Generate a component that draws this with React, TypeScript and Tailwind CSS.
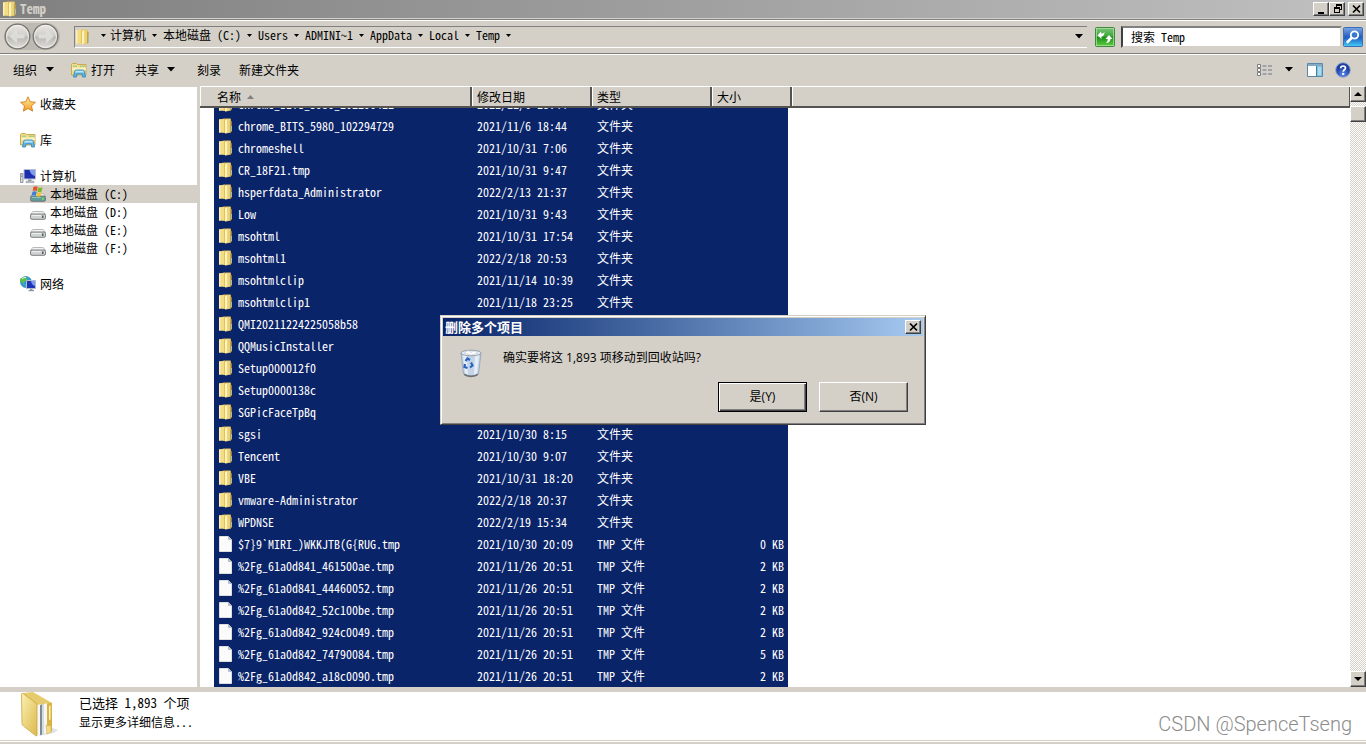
import type { ReactNode } from "react";

type Entry = { name: string; date?: string; type?: string; size?: string };

const FOLDER = "文件夹";
const TMP = "TMP 文件";

const ENTRIES: Entry[] = [
    { name: "chrome_BITS_5980_102290411", date: "2021/11/6 18:44", type: FOLDER },
    { name: "chrome_BITS_5980_102294729", date: "2021/11/6 18:44", type: FOLDER },
    { name: "chromeshell", date: "2021/10/31 7:06", type: FOLDER },
    { name: "CR_18F21.tmp", date: "2021/10/31 9:47", type: FOLDER },
    { name: "hsperfdata_Administrator", date: "2022/2/13 21:37", type: FOLDER },
    { name: "Low", date: "2021/10/31 9:43", type: FOLDER },
    { name: "msohtml", date: "2021/10/31 17:54", type: FOLDER },
    { name: "msohtml1", date: "2022/2/18 20:53", type: FOLDER },
    { name: "msohtmlclip", date: "2021/11/14 10:39", type: FOLDER },
    { name: "msohtmlclip1", date: "2021/11/18 23:25", type: FOLDER },
    { name: "QMI20211224225058b58" },
    { name: "QQMusicInstaller" },
    { name: "Setup000012f0" },
    { name: "Setup0000138c" },
    { name: "SGPicFaceTpBq" },
    { name: "sgsi", date: "2021/10/30 8:15", type: FOLDER },
    { name: "Tencent", date: "2021/10/30 9:07", type: FOLDER },
    { name: "VBE", date: "2021/10/31 18:20", type: FOLDER },
    { name: "vmware-Administrator", date: "2022/2/18 20:37", type: FOLDER },
    { name: "WPDNSE", date: "2022/2/19 15:34", type: FOLDER },
    { name: "$7}9`MIRI_)WKKJTB(G{RUG.tmp", date: "2021/10/30 20:09", type: TMP, size: "0 KB" },
    { name: "%2Fg_61a0d841_461500ae.tmp", date: "2021/11/26 20:51", type: TMP, size: "2 KB" },
    { name: "%2Fg_61a0d841_44460052.tmp", date: "2021/11/26 20:51", type: TMP, size: "2 KB" },
    { name: "%2Fg_61a0d842_52c100be.tmp", date: "2021/11/26 20:51", type: TMP, size: "2 KB" },
    { name: "%2Fg_61a0d842_924c0049.tmp", date: "2021/11/26 20:51", type: TMP, size: "2 KB" },
    { name: "%2Fg_61a0d842_74790084.tmp", date: "2021/11/26 20:51", type: TMP, size: "5 KB" },
    { name: "%2Fg_61a0d842_a18c0090.tmp", date: "2021/11/26 20:51", type: TMP, size: "2 KB" },
];

const CRUMBS = ["计算机", "本地磁盘 (C:)", "Users", "ADMINI~1", "AppData", "Local", "Temp"];

export default function App() {
    return (
        <div className="h-screen flex flex-col overflow-hidden bg-[#d4d0c8] text-black text-xs font-['Noto_Sans_Mono_CJK_SC','Noto_Sans_CJK_SC',monospace]">
            <TitleBar />
            <AddressBar />
            <Toolbar />
            <main className="flex-1 min-h-0 flex">
                <NavTree />
                <FileList />
            </main>
            <DetailsPane />
            <DeleteDialog />
        </div>
    );
}

/* Window chrome */

function TitleBar() {
    return (
        <header className="h-[18px] shrink-0 flex items-center pl-0.5 pr-0.5 bg-linear-to-r from-[#808080] to-[#c0c0c0]">
            <FolderIcon />
            <h1 className="ml-0.5 flex-1 text-[13px] font-bold text-[#d4d0c8]">Temp</h1>
            <div className="flex">
                <ChromeButton label="最小化"><path d="M3 9h6v2H3z" /></ChromeButton>
                <ChromeButton label="还原">
                    <path d="M5 1h6v6H9V6h1V3H6v1H5zM3 4h6v6H3zm1 2v3h4V6z" fillRule="evenodd" />
                </ChromeButton>
                <div className="w-[3px]" />
                <ChromeButton label="关闭"><CloseGlyph /></ChromeButton>
            </div>
        </header>
    );
}

function CloseGlyph() {
    return <path d="M3 2.500l7 7M10 2.500l-7 7" stroke="#000" strokeWidth="1.700" />;
}

function ChromeButton({ label, children }: { label: string; children: ReactNode }) {
    return (
        <button aria-label={label} className="w-4 h-[14px] flex items-center justify-center bg-[#d4d0c8] border border-t-white border-l-white border-r-[#404040] border-b-[#404040] shadow-[inset_-1px_-1px_0_#808080]">
            <svg width="13" height="12" viewBox="0 0 13 12">{children}</svg>
        </button>
    );
}

function Caret({ small }: { small?: boolean }) {
    return small ? (
        <svg width="5" height="3" viewBox="0 0 5 3"><path d="M0 0h5L2.500 3z" /></svg>
    ) : (
        <svg width="8" height="5" viewBox="0 0 8 5"><path d="M0 0h8L4 4.500z" /></svg>
    );
}

function AddressBar() {
    return (
        <div className="mt-px h-[35px] shrink-0 flex items-center pl-1 pr-[3px] border-t border-t-[#808080] border-b border-b-[#808080] shadow-[inset_0_1px_0_#fff,0_1px_0_#fff]">
            <div className="flex rounded-full bg-[#bdbab4]">
                <NavButton label="后退" />
                <NavButton label="前进" flip />
            </div>

            <nav className="ml-3.5 flex-1 h-[22px] min-w-0 flex items-center border-t border-l border-[#808080] border-b border-b-white">
                <FolderIcon />
                <div className="w-1.5" />
                <ol className="flex items-center pb-[3px]">
                    <li className="w-[13px] flex justify-center"><Caret small /></li>
                    {CRUMBS.map((crumb) => (
                        <li key={crumb} className="flex items-center">
                            <a href="#" className="whitespace-nowrap">{crumb}</a>
                            <span className="w-[17px] flex justify-center"><Caret small /></span>
                        </li>
                    ))}
                </ol>
                <button aria-label="以前的位置" className="ml-auto mr-1"><Caret /></button>
            </nav>

            <button aria-label="刷新" className="ml-2 mr-1.5">
                <svg width="20" height="20" viewBox="0 0 20 20">
                    <defs>
                        <linearGradient id="go" x2="0" y2="1">
                            <stop offset="0" stopColor="#7cc47a" />
                            <stop offset=".45" stopColor="#3fa73c" />
                            <stop offset=".5" stopColor="#1c8e1a" />
                            <stop offset="1" stopColor="#5fd03f" />
                        </linearGradient>
                    </defs>
                    <rect x=".5" y=".5" width="19" height="19" rx="1" fill="url(#go)" stroke="#3f8a3c" />
                    <rect x="1.5" y="1.5" width="17" height="17" fill="none" stroke="#b5e3ae" strokeOpacity=".7" />
                    <path d="M2.500 8.500L6 4.500l.3 2q1.700.2 3.200-1.500 0 4-3.200 4.700l.2 2.300z" fill="#fff" />
                    <path d="M10.500 9.500h2.300L14 8l3.500 4h-2q-.5 4-4.500 4 2-1.500 1.800-4h-2.300l2-2.500z" fill="#fff" />
                </svg>
            </button>

            <form className="flex items-center">
                <input aria-label="搜索" placeholder="搜索 Temp" className="w-[221px] h-[22px] pl-2 bg-white border-2 border-t-[#808080] border-l-[#404040] border-r-[#d4d0c8] border-b-[#d4d0c8] outline-none placeholder:text-black" />
                <button type="button" aria-label="开始搜索" className="ml-px">
                    <svg width="20" height="20" viewBox="0 0 20 20">
                        <defs>
                            <linearGradient id="find" x2="0" y2="1">
                                <stop offset="0" stopColor="#7ba7e2" />
                                <stop offset=".45" stopColor="#2c62c4" />
                                <stop offset=".55" stopColor="#1f5fc6" />
                                <stop offset="1" stopColor="#46d0f4" />
                            </linearGradient>
                        </defs>
                        <rect x=".5" y=".5" width="19" height="19" rx="1" fill="url(#find)" stroke="#3d6db5" />
                        <circle cx="11.500" cy="8" r="3.700" fill="#3a77d3" stroke="#fff" strokeWidth="1.800" />
                        <path d="M8.500 11l-4 4" stroke="#fff" strokeWidth="2.600" strokeLinecap="round" />
                    </svg>
                </button>
            </form>
        </div>
    );
}

function NavButton({ label, flip }: { label: string; flip?: boolean }) {
    const id = flip ? "fwd" : "back";
    return (
        <button aria-label={label} className="w-7 h-[27px]">
            <svg width="28" height="27" viewBox="0 0 28 27">
                <defs>
                    <linearGradient id={id} x2="0" y2="1">
                        <stop offset="0" stopColor="#e9e8e5" />
                        <stop offset=".48" stopColor="#cfcdc9" />
                        <stop offset=".52" stopColor="#b9b7b3" />
                        <stop offset="1" stopColor="#e2e0dc" />
                    </linearGradient>
                </defs>
                <circle cx="13.500" cy="13.500" r="12.300" fill={`url(#${id})`} stroke="#77756f" strokeWidth="1.300" />
                <circle cx="13.500" cy="13.500" r="11" fill="none" stroke="#f3f2ef" strokeOpacity=".8" />
                <path
                    d={flip ? "M21 13.500l-6.500-6v4.500H7v3h7.500v4.500z" : "M6 13.500l6.500-6v4.500H20v3h-7.500v4.500z"}
                    fill="#dddbd7"
                    stroke="#e6e5e1"
                    strokeWidth=".6"
                />
            </svg>
        </button>
    );
}

function Toolbar() {
    return (
        <div className="mt-px h-[31px] shrink-0 flex items-center pl-[13px] pr-[15px] pb-0.5 whitespace-nowrap">
            <button className="flex items-center gap-[9px]">组织 <Caret /></button>
            <button className="ml-[17px] flex items-center gap-1"><LibraryIcon />打开</button>
            <button className="ml-5 flex items-center gap-2">共享 <Caret /></button>
            <button className="ml-[22px]">刻录</button>
            <button className="ml-[18px]">新建文件夹</button>
            <div className="ml-auto flex items-center">
                <button aria-label="更改您的视图">
                    <svg width="16" height="14" viewBox="0 0 16 14" fill="none">
                        <path d="M.5 1.500h3v3h-3zM.5 5.500h3v3h-3zM.5 9.500h3v3h-3z" fill="#fff" stroke="#7b7b80" />
                        <path d="M5.500 3h4M11 3h4M5.500 7h4M11 7h4M5.500 11h4M11 11h4" stroke="#6a7488" strokeWidth="1.200" />
                    </svg>
                </button>
                <button aria-label="更多选项" className="ml-3"><Caret /></button>
                <button aria-label="预览窗格" className="ml-[14px]">
                    <svg width="16" height="14" viewBox="0 0 16 14">
                        <path d="M.5.500h15v13H.5z" fill="#fff" stroke="#5b87a8" />
                        <path d="M1 1h14v2H1z" fill="#86aac4" />
                        <path d="M10 3h5v10h-5z" fill="#7cc6e4" />
                        <path d="M9.500 3v10" stroke="#4e7b99" />
                        <path d="M11 4h3v8h-3z" fill="#a8dcf0" />
                    </svg>
                </button>
                <button aria-label="获取帮助" className="ml-3">
                    <svg width="16" height="16" viewBox="0 0 16 16">
                        <defs>
                            <radialGradient id="help" cy=".8">
                                <stop offset="0" stopColor="#5d8df0" />
                                <stop offset="1" stopColor="#1e3f9e" />
                            </radialGradient>
                        </defs>
                        <circle cx="8" cy="8" r="7.300" fill="url(#help)" stroke="#93a4cc" />
                        <path d="M5.700 6.300c0-3 4.800-3 4.800-.2 0 1.700-2.300 1.700-2.300 3.600" fill="none" stroke="#fff" strokeWidth="1.700" />
                        <path d="M7.200 10.900h2v2h-2z" fill="#fff" />
                    </svg>
                </button>
            </div>
        </div>
    );
}

/* Navigation tree */

function NavTree() {
    return (
        <nav className="w-[197px] shrink-0 mt-px pt-2 bg-white leading-[18px]">
            <TreeItem icon={<StarIcon />} label="收藏夹" />
            <div className="h-[18px]" />
            <TreeItem icon={<LibraryIcon />} label="库" />
            <div className="h-[18px]" />
            <TreeItem icon={<ComputerIcon />} label="计算机" />
            <TreeItem icon={<DriveIcon system />} label="本地磁盘 (C:)" nested selected />
            <TreeItem icon={<DriveIcon />} label="本地磁盘 (D:)" nested />
            <TreeItem icon={<DriveIcon />} label="本地磁盘 (E:)" nested />
            <TreeItem icon={<DriveIcon />} label="本地磁盘 (F:)" nested />
            <div className="h-[18px]" />
            <TreeItem icon={<NetworkIcon />} label="网络" />
        </nav>
    );
}

function TreeItem({ icon, label, nested, selected }: { icon: ReactNode; label: string; nested?: boolean; selected?: boolean }) {
    return (
        <a href="#" className={`h-[18px] flex items-center gap-1 ${nested ? "pl-[30px]" : "pl-5"} ${selected ? "bg-[#d4d0c8]" : ""}`}>
            {icon}
            <span>{label}</span>
        </a>
    );
}

/* File list */

function FileList() {
    return (
        <section className="ml-[3px] flex-1 min-w-0 flex bg-white">
            <div className="flex-1 min-w-0 flex flex-col">
                <div className="h-[22px] shrink-0 flex bg-[#d4d0c8] border-t border-t-white border-b-2 border-b-[#55534f]">
                    <button className="w-[272px] flex items-center gap-1.5 pl-4 border-l border-l-white border-r-2 border-r-[#55534f]">
                        名称
                        <svg width="7" height="4" viewBox="0 0 7 4"><path d="M3.500 0L7 4H0z" fill="#808080" /></svg>
                    </button>
                    <HeaderCell className="w-[120px]">修改日期</HeaderCell>
                    <HeaderCell className="w-[120px]">类型</HeaderCell>
                    <HeaderCell className="w-20">大小</HeaderCell>
                    <div className="flex-1 border-l border-l-white border-r border-r-[#55534f]" />
                </div>
                {/* scrolled so that the last row sits on the lower edge */}
                <div className="flex-1 min-h-0 overflow-hidden flex flex-col justify-end pl-[14px]">
                    <table className="w-[574px] shrink-0 table-fixed bg-[#0a246a] text-white">
                        <colgroup>
                            <col className="w-[257px]" />
                            <col className="w-[120px]" />
                            <col className="w-[120px]" />
                            <col className="w-[77px]" />
                        </colgroup>
                        <tbody>
                            {ENTRIES.map((entry) => <FileRow key={entry.name} entry={entry} />)}
                        </tbody>
                    </table>
                </div>
            </div>
            <Scrollbar />
        </section>
    );
}

function HeaderCell({ className, children }: { className: string; children: ReactNode }) {
    return (
        <button className={`${className} pl-1 text-left border-l border-l-white border-r-2 border-r-[#55534f]`}>
            {children}
        </button>
    );
}

function FileRow({ entry }: { entry: Entry }) {
    return (
        <tr className="h-[22px] leading-[22px] whitespace-nowrap">
            <td className="p-0">
                <div className="h-[22px] flex items-center gap-1 pl-1">
                    {entry.size ? <FileIcon /> : <FolderIcon />}
                    <span>{entry.name}</span>
                </div>
            </td>
            <td className="p-0 pl-1.5">{entry.date}</td>
            <td className="p-0 pl-1.5">{entry.type}</td>
            <td className="p-0 pr-1 text-right">{entry.size}</td>
        </tr>
    );
}

function Scrollbar() {
    return (
        <div className="w-4 shrink-0 flex flex-col bg-[repeating-conic-gradient(#d4d0c8_0_25%,#ffffff_0_50%)] bg-size-[2px_2px]">
            <ScrollButton label="向上滚动"><path d="M4 0l4 4H0z" /></ScrollButton>
            <div className="mt-1 h-4 bg-[#d4d0c8] border border-t-white border-l-white border-r-[#404040] border-b-[#404040] shadow-[inset_-1px_-1px_0_#808080]" />
            <div className="flex-1" />
            <ScrollButton label="向下滚动"><path d="M0 0h8L4 4z" /></ScrollButton>
        </div>
    );
}

function ScrollButton({ label, children }: { label: string; children: ReactNode }) {
    return (
        <button aria-label={label} className="w-4 h-4 flex items-center justify-center bg-[#d4d0c8] border border-t-white border-l-white border-r-[#404040] border-b-[#404040] shadow-[inset_-1px_-1px_0_#808080]">
            <svg width="8" height="4" viewBox="0 0 8 4">{children}</svg>
        </button>
    );
}

/* Bottom pane */

function DetailsPane() {
    return (
        <footer className="shrink-0 border-t-[5px] border-b-2 border-[#d4d0c8] bg-white">
            <div className="relative h-[49px] flex items-start gap-5 pl-5 border-b border-[#d4d0c8] mb-px">
                <BigFolderIcon />
                <div className="pt-0.5">
                    <p className="text-[13px] leading-[18px]">已选择 1,893 个项</p>
                    <a href="#" className="block leading-5">显示更多详细信息...</a>
                </div>
                <span className="absolute right-[14px] bottom-1 font-['Roboto',sans-serif] font-light text-xl leading-6 text-[#8c8c8c]">
                    CSDN @SpenceTseng
                </span>
            </div>
        </footer>
    );
}

/* Confirmation dialog */

function DeleteDialog() {
    return (
        <div className="fixed inset-0 pb-1 flex items-center justify-center font-['Open_Sans','Noto_Sans_CJK_SC',sans-serif]">
            <div role="dialog" aria-labelledby="dialog-title" className="w-[486px] p-0.5 bg-[#d4d0c8] border border-t-[#d4d0c8] border-l-[#d4d0c8] border-r-[#404040] border-b-[#404040] shadow-[inset_1px_1px_0_#fff,inset_-1px_-1px_0_#808080]">
                <div className="h-[18px] flex items-center pl-0.5 pr-0.5 bg-linear-to-r from-[#0a246a] to-[#a6caf0]">
                    <h2 id="dialog-title" className="flex-1 text-[13px] leading-[18px] font-bold text-white">删除多个项目</h2>
                    <ChromeButton label="关闭"><CloseGlyph /></ChromeButton>
                </div>
                <div className="h-[46px] flex gap-5 pl-4 pt-[13px]">
                    <RecycleBinIcon />
                    <p className="leading-[18px]">确实要将这 1,893 项移动到回收站吗?</p>
                </div>
                <div className="flex justify-end gap-3 pr-[15px] pb-2.5">
                    <button className="w-[89px] h-[30px] border border-black shadow-[inset_1px_1px_0_#fff,inset_-1px_-1px_0_#404040,inset_-2px_-2px_0_#808080]">
                        是(Y)
                    </button>
                    <button className="w-[89px] h-[30px] border border-t-white border-l-white border-r-[#404040] border-b-[#404040] shadow-[inset_-1px_-1px_0_#808080]">
                        否(N)
                    </button>
                </div>
            </div>
        </div>
    );
}

/* Icons */

function FolderIcon() {
    return (
        <svg className="shrink-0" width="16" height="16" viewBox="0 0 16 16">
            <path d="M1 1.500L6.500.500 7.500 1v14L1 14.500z" fill="#f3dc84" />
            <path d="M1 1.500l1.500-.3v13.500L1 14.500z" fill="#fbf0b8" />
            <path d="M6 1l2-.5h4.500l.5 1v13L8 15.500 6 14.500z" fill="#e3c159" />
            <path d="M7 2l2.500-1v13.500L7 15.500z" fill="#fdf3bd" />
            <path d="M9.500 1H12v13l-2.500.8z" fill="#ecd07a" />
            <path d="M12 2.500l1.700.8v10.500L12 14.500z" fill="#c5a244" />
            <path d="M13 8h1v5h-1z" fill="#9cc3b9" />
        </svg>
    );
}

function FileIcon() {
    return (
        <svg className="shrink-0" width="16" height="16" viewBox="0 0 16 16">
            <path d="M1.500.500h9l3 3v12h-12z" fill="#fbfbfb" stroke="#dedede" />
            <path d="M10.500.500v3h3z" fill="#bfc7cf" stroke="#9aa4ae" strokeWidth=".6" />
        </svg>
    );
}

function LibraryIcon() {
    return (
        <svg className="shrink-0" width="16" height="16" viewBox="0 0 16 16">
            <path d="M.5 2.500l1-1h4l1 1h8.500v10.500H.5z" fill="#f3dd8b" stroke="#c9aa51" />
            <path d="M2 3.500h4V5H2zM9 3.500h5V5H9z" fill="#a8cf8a" />
            <path d="M1 5.500h14V8H1z" fill="#fbefba" />
            <path d="M2.500 15l1-5.500q.4-1.500 2-1.500h6q1.600 0 2 1.500l1 5.500h-3l-.5-3h-5l-.5 3z" fill="#5cb5e6" stroke="#3182b8" strokeWidth=".8" />
            <path d="M4 10.500q.3-1.800 1.500-1.800h6q1.200 0 1.500 1.800z" fill="#bfe6f8" />
        </svg>
    );
}

function StarIcon() {
    return (
        <svg className="shrink-0" width="16" height="16" viewBox="0 0 16 16">
            <defs>
                <linearGradient id="star" x2="0" y2="1">
                    <stop offset="0" stopColor="#fff1a0" />
                    <stop offset="1" stopColor="#f59a26" />
                </linearGradient>
            </defs>
            <path d="M8 .8l2.200 4.900 5.200.6-3.900 3.600 1.100 5.200L8 12.500l-4.600 2.600 1.100-5.200L.6 6.300l5.200-.6z" fill="url(#star)" stroke="#d07a1d" strokeWidth=".9" />
        </svg>
    );
}

function ComputerIcon() {
    return (
        <svg className="shrink-0" width="16" height="16" viewBox="0 0 16 16">
            <path d="M.5 5.500h2.500v9H.5z" fill="#d5d9de" stroke="#7d858e" strokeWidth=".8" />
            <path d="M1.200 7h1.200M1.200 8.500h1.200" stroke="#6f7780" strokeWidth=".7" />
            <path d="M4 1.500h11.500v9.500H4z" fill="#1d2fb0" stroke="#b9bfca" />
            <path d="M9.500 2h5.500v6q-4.500-1-5.500-6z" fill="#7d9bf0" />
            <path d="M8 11.500h3.500V13H8z" fill="#9299a3" />
            <path d="M6 13.200h8v1.500H6z" fill="#b9bfc8" stroke="#858c96" strokeWidth=".5" />
        </svg>
    );
}

function DriveIcon({ system }: { system?: boolean }) {
    return (
        <svg className="shrink-0" width="16" height="16" viewBox="0 0 16 16">
            <path d="M3.500 7.500h9q1 0 1.700 1l1.200 2H.6l1.200-2q.7-1 1.700-1z" fill="#f3f3f3" stroke="#a5a7a9" strokeWidth=".8" />
            <rect x=".5" y="10" width="15" height="5.300" rx="1.500" fill={system ? "#5f9c9c" : "#d0d2d4"} stroke="#6f7274" strokeWidth=".9" />
            <path d="M2 11.500h9" stroke={system ? "#8fc4bd" : "#eeeeee"} strokeWidth="1" />
            <path d="M12 11.500h1.500v2.500H12z" fill={system ? "#7ee05a" : "#3f6b4b"} />
            {system && (
                <g>
                    <path d="M3.500.800q2.500-1 4.200 0L6.900 5q-2-.9-4.200 0z" fill="#e5532d" />
                    <path d="M8.300 1.200q2 1 4.200 0l-.9 4.200q-2.200 1-4.200 0z" fill="#7cb82f" />
                    <path d="M2.500 5.700q2.200-.9 4.200 0l-.9 4q-2-.9-4.200 0z" fill="#3b7fd9" />
                    <path d="M7.300 6q2 1 4.200 0l-.9 4q-2.200 1-4.200 0z" fill="#f6c22d" />
                </g>
            )}
        </svg>
    );
}

function NetworkIcon() {
    return (
        <svg className="shrink-0" width="16" height="16" viewBox="0 0 16 16">
            <circle cx="6" cy="6" r="5.500" fill="#2f9fd8" stroke="#1f6fae" strokeWidth=".6" />
            <path d="M3 1.500q3-1.500 4 .5T5.500 5 4 7.500 1 6t2-4.500zM6 8l2 1-2 2.400q-1.500-2-0-3.400z" fill="#5cbf4a" />
            <path d="M2 3q2-2 4-1.500" fill="none" stroke="#d4f3fb" />
            <path d="M6.500 4.500h9v8h-9z" fill="#1d35b8" stroke="#b4bccb" />
            <path d="M11 5h4v5q-3.500-1-4-5z" fill="#7d9bf0" />
            <path d="M10 13h2.500v1H10zM8.500 14h5.500v1.200H8.500z" fill="#8f96a1" />
        </svg>
    );
}

function BigFolderIcon() {
    return (
        <svg className="shrink-0" width="39" height="46" viewBox="0 0 39 46">
            <defs>
                <linearGradient id="cover" x2="1" y2="1">
                    <stop offset="0" stopColor="#fbf0b0" />
                    <stop offset="1" stopColor="#dcb94c" />
                </linearGradient>
            </defs>
            <path d="M19 44l15-3 4-3-8-3z" fill="#c9d2da" opacity=".6" />
            <path d="M3 1l10-1 19 11v29l-13 3z" fill="#e6cb6c" />
            <path d="M17 13l4-1v31l-4 1z" fill="#f7f7f5" />
            <path d="M20 13l2-.5v30l-2 .7z" fill="#7f8a94" />
            <path d="M22 12.500l2-.5v30l-2 .5z" fill="#d5dade" />
            <path d="M24 12l3-.8V41l-3 1z" fill="#f4f6f7" />
            <path d="M27 12l4-1.500 1 1V39l-5 2z" fill="#d9b441" />
            <path d="M29 14l1.500-.5v14L29 28z" fill="#fff3c4" />
            <path d="M1.500 2.500q0-1.500 1.500-1L16 11q1 .8 1 2v30q0 1.500-1.500.6L3.500 34Q2 33 2 31.500z" fill="url(#cover)" stroke="#c9a540" strokeWidth=".8" />
            <path d="M26 33l5 1v6l-4 2z" fill="#f2da86" stroke="#c9a540" strokeWidth=".5" />
        </svg>
    );
}

function RecycleBinIcon() {
    return (
        <svg className="shrink-0" width="24" height="29" viewBox="0 0 24 29">
            <path d="M2 4l2.500 21q7.500 4.500 15 0L22 4z" fill="#c3d4e6" stroke="#8fa0b3" strokeWidth=".8" />
            <path d="M4 6l2 18 3 1.500L7.500 6zM16 6l-1 20 3-1.500L20 6z" fill="#eef4fa" opacity=".8" />
            <ellipse cx="12" cy="4" rx="10" ry="2.800" fill="#e7edf3" stroke="#8f98a3" strokeWidth=".9" />
            <path d="M5 4l4-2.500 3 2 3-1.500 4 2-7 2z" fill="#fff" stroke="#b8c4d0" strokeWidth=".5" />
            <path d="M5 24.500q7 4 14 0l-.3 2q-6.700 3.500-13.400 0z" fill="#6f7378" />
            <g fill="none" stroke="#2a63c0" strokeWidth="2.200">
                <path d="M6.500 12l2-2.500 2.500 1.500" />
                <path d="M12 13.500l1.500 3-2.500 2" />
                <path d="M8.500 19l-3-1 .5-3" />
            </g>
        </svg>
    );
}
